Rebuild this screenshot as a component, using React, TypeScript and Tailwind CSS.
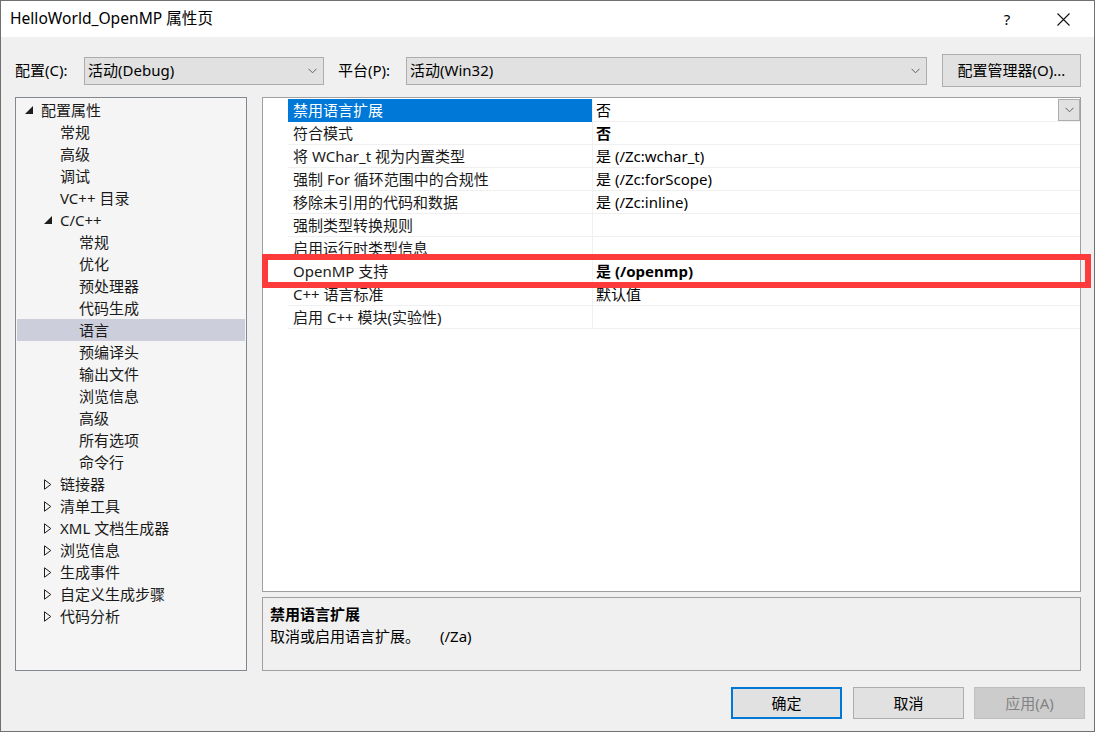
import React from "react";

type TreeItem = { label: string; level: 0 | 1 | 2; tri?: "open" | "closed"; selected?: boolean };

const tree: TreeItem[] = [
  { label: "配置属性", level: 0, tri: "open" },
  { label: "常规", level: 1 },
  { label: "高级", level: 1 },
  { label: "调试", level: 1 },
  { label: "VC++ 目录", level: 1 },
  { label: "C/C++", level: 1, tri: "open" },
  { label: "常规", level: 2 },
  { label: "优化", level: 2 },
  { label: "预处理器", level: 2 },
  { label: "代码生成", level: 2 },
  { label: "语言", level: 2, selected: true },
  { label: "预编译头", level: 2 },
  { label: "输出文件", level: 2 },
  { label: "浏览信息", level: 2 },
  { label: "高级", level: 2 },
  { label: "所有选项", level: 2 },
  { label: "命令行", level: 2 },
  { label: "链接器", level: 1, tri: "closed" },
  { label: "清单工具", level: 1, tri: "closed" },
  { label: "XML 文档生成器", level: 1, tri: "closed" },
  { label: "浏览信息", level: 1, tri: "closed" },
  { label: "生成事件", level: 1, tri: "closed" },
  { label: "自定义生成步骤", level: 1, tri: "closed" },
  { label: "代码分析", level: 1, tri: "closed" },
];

const indent: Record<number, string> = { 0: "w-[8px]", 1: "w-[27px]", 2: "w-[46px]" };

type Prop = { name: string; value: string; bold?: boolean; selected?: boolean };
const props: Prop[] = [
  { name: "禁用语言扩展", value: "否", selected: true },
  { name: "符合模式", value: "否", bold: true },
  { name: "将 WChar_t 视为内置类型", value: "是 (/Zc:wchar_t)" },
  { name: "强制 For 循环范围中的合规性", value: "是 (/Zc:forScope)" },
  { name: "移除未引用的代码和数据", value: "是 (/Zc:inline)" },
  { name: "强制类型转换规则", value: "" },
  { name: "启用运行时类型信息", value: "" },
  { name: "OpenMP 支持", value: "是 (/openmp)", bold: true },
  { name: "C++ 语言标准", value: "默认值" },
  { name: "启用 C++ 模块(实验性)", value: "" },
];

function Chevron() {
  return (
    <svg width="9" height="6" viewBox="0 0 9 6" className="shrink-0">
      <polyline points="0.5,0.8 4.5,4.8 8.5,0.8" fill="none" stroke="#606060" strokeWidth="1" />
    </svg>
  );
}

function Tri({ kind }: { kind?: "open" | "closed" }) {
  if (kind === "open")
    return (
      <svg width="8" height="8" viewBox="0 0 8 8">
        <polygon points="8,0 8,8 0,8" fill="#1e1e1e" />
      </svg>
    );
  if (kind === "closed")
    return (
      <svg width="8" height="11" viewBox="0 0 8 11">
        <polygon points="0.5,0.8 6.8,5.5 0.5,10.2" fill="none" stroke="#1e1e1e" strokeWidth="1" />
      </svg>
    );
  return null;
}

export default function App() {
  return (
    <div className="w-[1095px] h-[732px] border border-[#707070] flex flex-col bg-[#f0f0f0] text-[15px] text-[#1a1a1a] font-['Noto_Sans','Noto_Sans_CJK_SC',sans-serif] leading-none overflow-hidden">
      {/* title bar */}
      <div className="h-[36px] bg-white flex items-center shrink-0">
        <div className="pl-[9px] text-[15.6px] text-black">HelloWorld_OpenMP 属性页</div>
        <div className="flex-1" />
        <div className="w-[58px] flex justify-center text-[15px] text-black mr-[-2px]">?</div>
        <div className="w-[58px] flex justify-center mr-[2px]">
          <svg width="13" height="13" viewBox="0 0 13 13">
            <path d="M0.5 0.5 L12.5 12.5 M12.5 0.5 L0.5 12.5" stroke="#111" strokeWidth="1.1" />
          </svg>
        </div>
      </div>

      {/* body */}
      <div className="flex-1 flex flex-col pl-[14px]">
        {/* top row */}
        <div className="mt-[17px] h-[33px] flex items-center">
          <div className="w-[69px] text-black">配置(C):</div>
          <div className="w-[240px] h-[28px] bg-[#e1e1e1] border border-[#adadad] flex items-center pl-[3px] pr-[6px]">
            <span className="flex-1 text-black">活动(Debug)</span>
            <Chevron />
          </div>
          <div className="ml-[14px] w-[68px] text-black">平台(P):</div>
          <div className="w-[521px] h-[28px] bg-[#e1e1e1] border border-[#adadad] flex items-center pl-[3px] pr-[6px]">
            <span className="flex-1 text-black">活动(Win32)</span>
            <Chevron />
          </div>
          <div className="ml-[15px] w-[139px] h-[33px] bg-[#e1e1e1] border border-[#adadad] flex items-center justify-center text-black">
            配置管理器(O)...
          </div>
        </div>

        {/* middle */}
        <div className="mt-[10px] h-[574px] flex">
          {/* tree */}
          <div className="w-[232px] h-full border border-[#828790] bg-[#f5f5f5] p-[1px] pt-[1px]">
            {tree.map((t, i) => (
              <div
                key={i}
                className={`h-[22px] flex items-center ${t.selected ? "bg-[#cccedb]" : ""}`}
              >
                <div className={`${indent[t.level]} shrink-0`} />
                <div className="w-[16px] shrink-0 flex items-center">
                  <Tri kind={t.tri} />
                </div>
                <span className="whitespace-nowrap">{t.label}</span>
              </div>
            ))}
          </div>

          {/* right column */}
          <div className="ml-[15px] w-[819px] flex flex-col">
            <div className="relative h-[496px] border border-[#a0a0a0] bg-white pt-[1px]">
              {props.map((p, i) => (
                <div key={i} className="h-[23px] flex">
                  <div className="w-[25px] shrink-0" />
                  <div
                    className={`w-[304px] shrink-0 h-[23px] flex items-center pl-[5px] border-b ${
                      p.selected ? "bg-[#0078d7] text-white border-[#0078d7]" : "border-[#f0f0f0]"
                    }`}
                  >
                    <span className="whitespace-nowrap">{p.name}</span>
                  </div>
                  <div className="flex-1 h-[23px] flex items-center border-l border-b border-[#f0f0f0] pl-[3px]">
                    <span className={`flex-1 whitespace-nowrap text-black ${p.bold ? "font-bold" : ""}`}>{p.value}</span>
                    {p.selected && (
                      <div className="w-[22px] h-[22px] bg-[#e1e1e1] border border-[#adadad] flex items-center justify-center self-start">
                        <Chevron />
                      </div>
                    )}
                  </div>
                </div>
              ))}
              {/* red highlight frame */}
              <div className="absolute left-[-1px] top-[156px] w-[829px] h-[34px] border-[6px] border-[#fd3b3b] pointer-events-none" />
            </div>
            <div className="mt-[5px] h-[74px] border border-[#a0a0a0] bg-[#f0f0f0] pl-[7px] pt-[5px]">
              <div className="h-[22px] flex items-center font-bold text-black">禁用语言扩展</div>
              <div className="h-[22px] flex items-center text-black">
                <span>取消或启用语言扩展。</span>
                <span className="ml-[20px]">(/Za)</span>
              </div>
            </div>
          </div>
        </div>

        {/* buttons */}
        <div className="mt-[16px] h-[32px] flex justify-end pr-[9px]">
          <div className="w-[111px] h-[32px] bg-[#e1e1e1] border-2 border-[#0078d7] flex items-center justify-center text-black">确定</div>
          <div className="ml-[11px] w-[111px] h-[32px] bg-[#e1e1e1] border border-[#adadad] flex items-center justify-center text-black">取消</div>
          <div className="ml-[10px] w-[111px] h-[32px] bg-[#cccccc] border border-[#bfbfbf] flex items-center justify-center text-[#838383]">应用(A)</div>
        </div>
      </div>
    </div>
  );
}
